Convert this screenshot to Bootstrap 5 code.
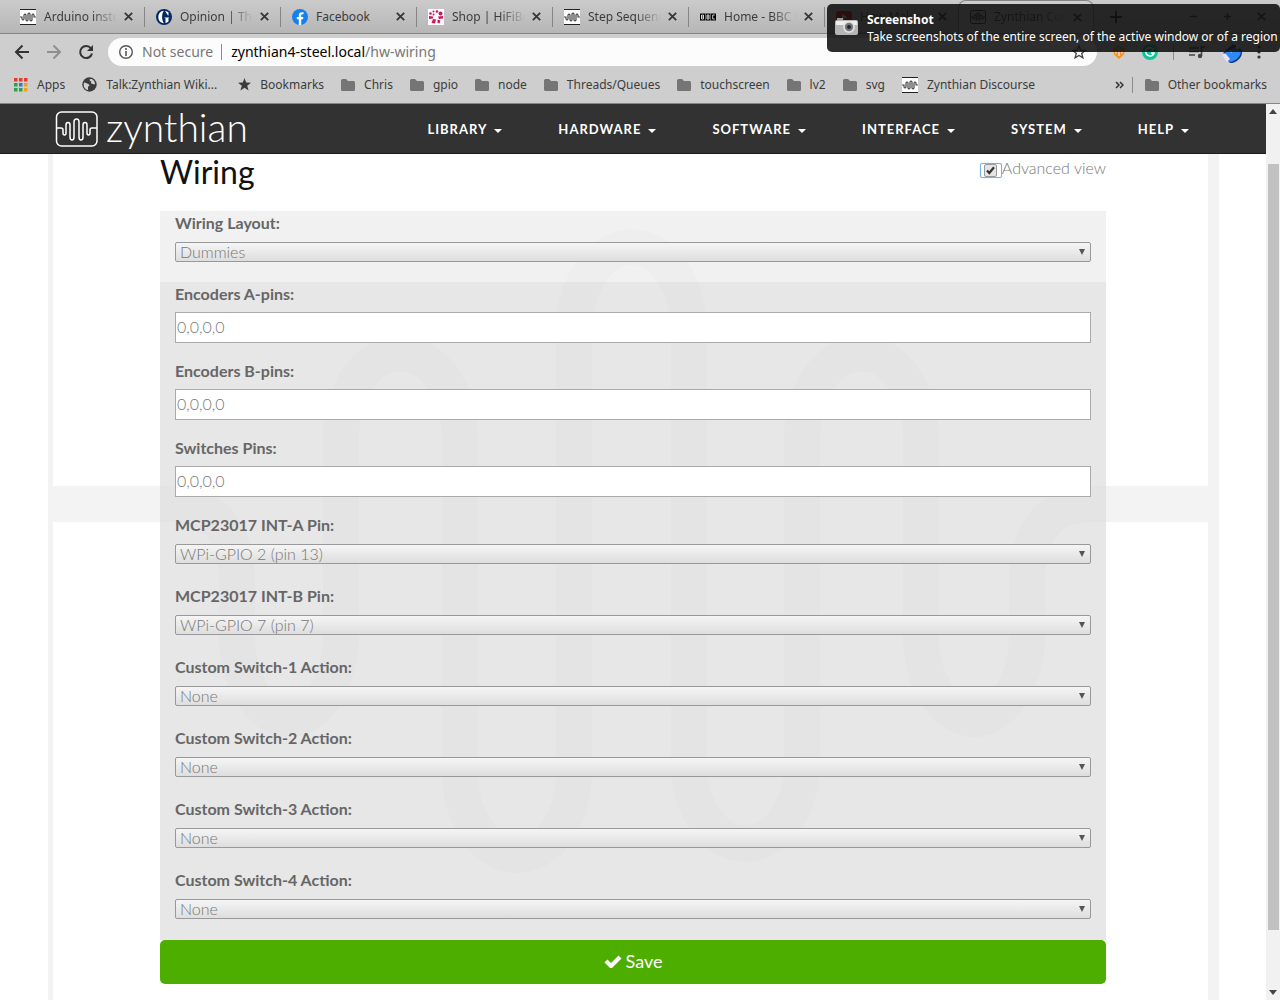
<!DOCTYPE html>
<html lang="en">
<head>
<meta charset="utf-8">
<meta name="viewport" content="width=device-width, initial-scale=1">
<title>Zynthian Configuration</title>
<link href="https://cdn.jsdelivr.net/npm/bootstrap@5.3.0/dist/css/bootstrap.min.css" rel="stylesheet">
<script src="https://cdn.jsdelivr.net/npm/bootstrap@5.3.0/dist/js/bootstrap.bundle.min.js" defer></script>
<style>
  body { font-family: Lato, sans-serif; font-weight: 300; font-size: 16px; line-height: 24px; color: #777; background: #fff; }
  svg { display: block; flex: none; }
  button.plain { border: 0; background: none; padding: 0; color: inherit; display: block; flex: none; }

  /* browser window */
  .chrome { font-family: "Noto Sans", sans-serif; font-weight: 400; font-size: 12px; line-height: 16px; color: #3c3c3c; background: #cecece; border-bottom: 1px solid #858585; }
  .chrome a { color: inherit; text-decoration: none; white-space: nowrap; }
  .tabstrip { height: 34px; padding-left: 9px; background: linear-gradient(#cbcbcb, #b6b6b6); border-bottom: 1px solid #858585; }
  .tab-item { width: 136px; height: 20px; padding: 0 11px; border-right: 1px solid #858585; flex: none; }
  .tab-item.last { width: 133px; border: 0; }
  .tab-item.current { height: 33px; border: 1px solid #858585; border-bottom: 0; border-radius: 8px 8px 0 0; background: #cecece; align-self: flex-end; }
  .tab-title { width: 74px; margin: 0 7px 0 8px; overflow: hidden; white-space: nowrap; -webkit-mask-image: linear-gradient(90deg, #000 65%, transparent); mask-image: linear-gradient(90deg, #000 65%, transparent); }
  .tab-title.whole { -webkit-mask-image: none; mask-image: none; }
  .win-buttons { gap: 25px; padding-right: 14px; }
  .toolbar { height: 36px; padding: 0 19px 0 14px; }
  .extensions { gap: 15px; }
  .omnibox { height: 28px; margin: 0 14px; padding: 0 10px; border-radius: 14px; background: #fcfcfc; font-size: 14px; line-height: 20px; color: #777; }
  .vrule { width: 1px; height: 16px; background: #8c8c8c; flex: none; }
  .omnibox .vrule { margin: 0 9px 0 8px; }
  .bookmarks { height: 33px; padding: 0 13px 4px 14px; }
  .bookmarks a { display: flex; align-items: center; gap: 9px; margin-right: 17px; }
  .bookmarks a:last-child { margin: 0 0 0 4px; }

  .notice { position: absolute; top: 4px; right: 0; width: 453px; height: 48px; padding: 7px 6px 0 8px; gap: 8px; border-radius: 5px; background: rgba(16, 16, 16, .88); color: #fff; font: 400 12px/17px "Noto Sans", sans-serif; white-space: nowrap; z-index: 5; }

  /* page */
  .scroller { width: 14px; background: #f1f1f1; padding: 5px 1px; flex: none; }
  .thumb { height: 766px; margin-top: 50px; width: 11px; background: #c1c1c1; align-self: center; }
  .watermark { position: absolute; inset: 0; width: 100%; height: 100%; }
  .mainnav { height: 50px; padding: 0 49px 0 55px; background: rgba(46, 46, 46, .98); border-bottom: 1px solid #1c1c1c; }
  .wordmark { font-size: 39px; line-height: 44px; font-weight: 300; color: #fff; padding-bottom: 4px; }
  .mainnav .nav-link { padding: 0 28px; font-size: 13px; line-height: 20px; font-weight: 700; letter-spacing: 1px; color: #fff; white-space: nowrap; }
  .mainnav .dropdown-toggle::after { margin-left: 7px; border-width: 4px 4px 0; vertical-align: 1px; }
  .content { max-width: 946px; }
  .content h2 { font-size: 32px; line-height: 35px; font-weight: 400; color: #111; margin: 0; }
  .headline { height: 57px; }
  .headline label { line-height: 27px; }
  .tick { appearance: none; width: 13px; height: 13px; margin: 0; border: 1px solid #9a9a9a; border-radius: 2px; background: #e4e4e4 url("data:image/svg+xml,%3Csvg xmlns='http://www.w3.org/2000/svg' viewBox='0 0 11 11'%3E%3Cpath d='M2 5.5 4.3 8 9 2.3' fill='none' stroke='%23333' stroke-width='2.2'/%3E%3C/svg%3E"); display: block; }
  .tickframe { padding: 0 4px 0 3px; border: 1px solid #70b4f0; border-radius: 2px; margin-top: 9px; box-shadow: 0 0 1px #70b4f0; }
  .panel { background: rgba(235, 235, 235, .7); }
  .panel-inner { background: rgba(0, 0, 0, .04); padding-bottom: 1px; }
  .field { padding: 0 15px 20px; }
  .field.typed { padding-bottom: 16px; }
  .field label { display: block; font-weight: 700; color: #666; height: 31px; }
  .field.typed label { height: 30px; }
  .field select { display: block; width: 100%; height: 20px; padding: 0 4px; border: 1px solid #999; border-radius: 2px; appearance: none; font-size: 16px; line-height: 18px; font-weight: 300; color: #777;
    background: url("data:image/svg+xml,%3Csvg xmlns='http://www.w3.org/2000/svg' width='6' height='6'%3E%3Cpath d='M0 0h6L3 6z' fill='%23555'/%3E%3C/svg%3E") no-repeat right 5px center, linear-gradient(#f5f5f5, #dedede); }
  .field input { display: block; width: 100%; height: 31px; padding: 0 1px 2px; border: 1px solid #aaa; border-radius: 0; background: #fff; font-size: 16px; font-weight: 300; color: #777; }
  .save { height: 44px; border: 0; border-radius: 5px; background: #4eae00; color: #fff; font-size: 18px; line-height: 26px; padding: 0 0 3px; margin-bottom: 16px; }
</style>
</head>
<body>
<!-- shared symbols -->
<svg width="0" height="0" class="position-absolute" aria-hidden="true">
  <symbol id="wave" viewBox="0 0 16 16"><path fill="#fff" d="M0 0h16v16H0z"/><path d="M0 .5h16M0 15.5h16" stroke="#222"/><path d="M0 8h2v2q1 2 2 0V6q1-2 2 0v5q1 2 2 0V5q1-2 2 0v6q1 2 2 0V6q1-2 2 0v2h2" fill="none" stroke="#444" stroke-width="1.2"/></symbol>
  <symbol id="cross" viewBox="0 0 9 9"><path d="m.8.8 7.4 7.4m0-7.4L.8 8.2" stroke="#333" stroke-width="1.7"/></symbol>
  <symbol id="folder" viewBox="0 0 14 12"><path d="M0 1.5Q0 0 1.5 0H5l2 2h5.500Q14 2 14 3.500v7Q14 12 12.500 12h-11Q0 12 0 10.500z" fill="#757575"/></symbol>
</svg>

<div class="min-vh-100 d-flex flex-column position-relative">
  <header class="chrome">
    <div class="tabstrip d-flex align-items-center">
      <div class="tab-item d-flex align-items-center"><svg width="16" height="16"><use href="#wave"/></svg><span class="tab-title">Arduino instead</span><button class="plain" aria-label="Close tab"><svg width="9" height="9"><use href="#cross"/></svg></button></div>
      <div class="tab-item d-flex align-items-center"><svg width="16" height="16" viewBox="0 0 16 16"><circle cx="8" cy="8" r="8" fill="#052962"/><path d="M8 1.800C.5 2 .5 14 8 14.200 5.500 12 5.500 4 8 1.800zM9 2c1.500.2 2.700.8 3.500 1.500v3H12zM8 8.500h5.500l-1 .8v3.200c-.8.700-2 1.200-3 1.400V9.300z" fill="#fff"/></svg><span class="tab-title">Opinion | The G</span><button class="plain" aria-label="Close tab"><svg width="9" height="9"><use href="#cross"/></svg></button></div>
      <div class="tab-item d-flex align-items-center"><svg width="16" height="16" viewBox="0 0 16 16"><circle cx="8" cy="8" r="8" fill="#1480f0"/><path d="M6.800 16v-5.700H4.800V8h2V6.300c0-2 1.200-3.100 3-3.100l1.700.1v2h-1c-1 0-1.300.600-1.300 1.200V8h2.200l-.4 2.300H9.200V16z" fill="#fff"/></svg><span class="tab-title whole">Facebook</span><button class="plain" aria-label="Close tab"><svg width="9" height="9"><use href="#cross"/></svg></button></div>
      <div class="tab-item d-flex align-items-center"><svg width="16" height="16" viewBox="0 0 16 16"><path fill="#fff" d="M0 0h16v16H0z"/><g fill="#d5145f"><circle cx="12.500" cy="4.500" r="2"/><path d="m10 7.500 5-.5v2.500l-4 .5z"/><circle cx="9" cy="2.500" r="1.300"/><circle cx="5.500" cy="2.500" r="1"/><circle cx="2.500" cy="4.500" r="1.300"/><path d="m1 7 4 .5v2L1 10z"/><circle cx="5.500" cy="5.500" r="1"/><path d="m5 10 3 .5-1 4-3.500-.5z"/><path d="m9.500 10.500 3 1-1 3-2-.5z"/></g></svg><span class="tab-title">Shop | HiFiBerry</span><button class="plain" aria-label="Close tab"><svg width="9" height="9"><use href="#cross"/></svg></button></div>
      <div class="tab-item d-flex align-items-center"><svg width="16" height="16"><use href="#wave"/></svg><span class="tab-title">Step Sequencer</span><button class="plain" aria-label="Close tab"><svg width="9" height="9"><use href="#cross"/></svg></button></div>
      <div class="tab-item d-flex align-items-center"><svg width="16" height="16" viewBox="0 0 16 16"><path d="M0 4.500h5v7H0zm5.500 0h5v7h-5zm5.500 0h5v7h-5z"/><g fill="none" stroke="#fff" stroke-width=".8"><path d="M1.500 6h2v4h-2zm0 2h2M7 6h2v4H7zm0 2h2M14.700 6h-2v4h2"/></g></svg><span class="tab-title">Home - BBC N</span><button class="plain" aria-label="Close tab"><svg width="9" height="9"><use href="#cross"/></svg></button></div>
      <div class="tab-item last d-flex align-items-center"><svg width="16" height="16" viewBox="0 0 16 16"><rect y="2" width="16" height="12" rx="3" fill="#e00"/><path d="m6 5 5 3-5 3z" fill="#fff"/></svg><span class="tab-title">How Making</span><button class="plain" aria-label="Close tab"><svg width="9" height="9"><use href="#cross"/></svg></button></div>
      <div class="tab-item current d-flex align-items-center"><svg width="16" height="16" viewBox="0 0 16 16" fill="none" stroke="#222"><rect x=".5" y="1.500" width="15" height="13" rx="2"/><path d="M1 8h2v2h1V6h2v5h1V4h2v7h1V6h2v4h1V8h2"/></svg><span class="tab-title">Zynthian Config</span><button class="plain" aria-label="Close tab"><svg width="9" height="9"><use href="#cross"/></svg></button></div>
      <button class="plain ms-3" aria-label="New tab"><svg width="12" height="12" viewBox="0 0 12 12"><path d="M6 0v12M0 6h12" stroke="#222" stroke-width="2"/></svg></button>
      <div class="win-buttons d-flex align-items-center ms-auto">
        <button class="plain" aria-label="Minimise"><svg width="9" height="9" viewBox="0 0 9 9"><path d="M1 4.500h7" stroke="#333" stroke-width="1.500"/></svg></button>
        <button class="plain" aria-label="Maximise"><svg width="9" height="9" viewBox="0 0 9 9"><path d="M1 4.500h7M4.500 1v7" stroke="#333" stroke-width="1.500"/></svg></button>
        <button class="plain" aria-label="Close"><svg width="9" height="9"><use href="#cross"/></svg></button>
      </div>
    </div>

    <div class="toolbar d-flex align-items-center">
      <button class="plain" aria-label="Back"><svg width="16" height="16" viewBox="0 0 16 16" fill="none" stroke="#333" stroke-width="2"><path d="M15 8H2m6.500-6.500L2 8l6.500 6.500"/></svg></button>
      <button class="plain ms-3" aria-label="Forward"><svg width="16" height="16" viewBox="0 0 16 16" fill="none" stroke="#8f8f8f" stroke-width="2"><path d="M1 8h13M7.500 1.500 14 8l-6.500 6.500"/></svg></button>
      <button class="plain ms-3" aria-label="Reload"><svg width="16" height="16" viewBox="0 0 16 16"><path d="M13 4.500A6 6 0 1 0 14 9.500" fill="none" stroke="#333" stroke-width="2"/><path d="M15 1v6H9z" fill="#333"/></svg></button>
      <div class="omnibox d-flex align-items-center flex-grow-1">
        <svg width="16" height="16" viewBox="0 0 16 16"><circle cx="8" cy="8" r="6.300" fill="none" stroke="#555" stroke-width="1.400"/><path d="M8 4v2m0 1v5" stroke="#555" stroke-width="1.600"/></svg>
        <span class="ms-2">Not secure</span><span class="vrule"></span>
        <span class="flex-grow-1"><span class="text-black">zynthian4-steel.local</span>/hw-wiring</span>
        <button class="plain" aria-label="Bookmark this page"><svg width="16" height="16" viewBox="0 0 16 16"><path d="m8 2 1.700 4.200 4.500.3-3.500 2.900 1.200 4.400L8 11.400l-3.900 2.400 1.200-4.400-3.500-2.900 4.500-.3z" fill="none" stroke="#444" stroke-width="1.300"/></svg></button>
      </div>
      <div class="extensions d-flex align-items-center">
        <svg width="16" height="16" viewBox="0 0 16 16"><path d="m8 1 6 3.500-1 6L8 15l-5-4.500-1-6z" fill="#f7931e"/><path d="M8 4v8M5 6.500v3m6-3v3" stroke="#ddd" stroke-width="1.500"/></svg>
        <svg width="16" height="16" viewBox="0 0 16 16"><circle cx="8" cy="8" r="8" fill="#15c39a"/><path d="M11.500 5.500A4.200 4.200 0 1 0 12 9H9" fill="none" stroke="#fff" stroke-width="1.600"/></svg>
        <span class="vrule"></span>
        <svg width="16" height="14" viewBox="0 0 16 14"><path d="M0 3h10M0 6.500h10M0 10h6M12.500 11V2H16" fill="none" stroke="#444" stroke-width="1.600"/><circle cx="11" cy="11" r="2.200" fill="#444"/></svg>
        <svg width="22" height="22" viewBox="0 0 22 22"><path d="M2 13 13 3l9 6c1 6-4 13-12 13z" fill="#123a7a"/><path d="m3 13 10-6 8 3c0 5-5 10-11 11z" fill="#2f8af5"/><path d="m1 12 5 1 4 5-3 3zM15 7l3-3 1 5zM9 10l2-1 1 3z" fill="#e8e0ff"/></svg>
        <svg width="4" height="16" viewBox="0 0 4 16" fill="#333"><circle cx="2" cy="3" r="1.600"/><circle cx="2" cy="8" r="1.600"/><circle cx="2" cy="13" r="1.600"/></svg>
      </div>
    </div>

    <nav class="bookmarks d-flex align-items-center" aria-label="Bookmarks">
      <a href="#"><svg width="14" height="14" viewBox="0 0 14 14"><path d="M0 0h3.500v3.500H0zM5 0h3.500v3.500H5zm5 0h3.500v3.500H10z" fill="#e8392c"/><path d="M0 5h3.500v3.500H0zM0 10h3.500v3.500H0z" fill="#2ca04c"/><path d="M5 5h3.500v3.500H5z" fill="#2a78e0"/><path d="M5 10h3.500v3.500H5z" fill="#2ca04c"/><path d="M10 5h3.500v3.500H10zm0 5h3.500v3.500H10z" fill="#f0a020"/></svg>Apps</a>
      <a href="#"><svg width="15" height="15" viewBox="0 0 15 15"><circle cx="7.500" cy="7.500" r="7.200" fill="#3c3c3c"/><path d="M2 5.500c2 0 3 1 5 2 1 1 0 2-1 2v3.500c-3-.5-5-3-4-7.500zM8 2c-1 1 0 2 1 2.500S8 6 9.500 6.500 12 8 13 7c0-3-2-5-5-5z" fill="#d0d0d0"/></svg>Talk:Zynthian Wiki...</a>
      <a href="#" class="ps-1"><svg width="13" height="13" viewBox="0 0 13 13"><path d="m6.500 0 1.700 4.500 4.800.2-3.800 3 1.400 4.800-4.100-2.800-4.100 2.800 1.400-4.800-3.800-3 4.800-.2z" fill="#3c3c3c"/></svg>Bookmarks</a>
      <a href="#"><svg width="14" height="12"><use href="#folder"/></svg>Chris</a>
      <a href="#"><svg width="14" height="12"><use href="#folder"/></svg>gpio</a>
      <a href="#"><svg width="14" height="12"><use href="#folder"/></svg>node</a>
      <a href="#"><svg width="14" height="12"><use href="#folder"/></svg>Threads/Queues</a>
      <a href="#"><svg width="14" height="12"><use href="#folder"/></svg>touchscreen</a>
      <a href="#"><svg width="14" height="12"><use href="#folder"/></svg>lv2</a>
      <a href="#"><svg width="14" height="12"><use href="#folder"/></svg>svg</a>
      <a href="#"><svg width="16" height="16"><use href="#wave"/></svg>Zynthian Discourse</a>
      <button class="plain ms-auto" aria-label="More bookmarks"><svg width="9" height="8" viewBox="0 0 9 8"><path d="m1 1 3 3-3 3m4-6 3 3-3 3" fill="none" stroke="#333" stroke-width="1.500"/></svg></button>
      <span class="vrule mx-2"></span>
      <a href="#"><svg width="14" height="12"><use href="#folder"/></svg>Other bookmarks</a>
    </nav>
  </header>

  <div class="notice d-flex" role="status">
    <svg width="24" height="36" viewBox="0 0 24 36"><path d="M2 7h6v3H2z" fill="#999"/><rect x="0" y="9" width="23" height="15" rx="2" fill="#b5b5b5"/><path d="M1 10h21v4H1z" fill="#eee"/><circle cx="14" cy="16" r="6" fill="#e0e0e0"/><circle cx="14" cy="16" r="4.200" fill="#777"/><circle cx="14" cy="16" r="2" fill="#223"/></svg>
    <div><div class="fw-bold">Screenshot</div><div>Take screenshots of the entire screen, of the active window or of a region</div></div>
  </div>

  <div class="d-flex flex-grow-1">
    <div class="flex-grow-1 position-relative">
      <!-- waveform watermark behind the page -->
      <svg class="watermark" viewBox="0 0 1266 896" preserveAspectRatio="xMidYMin slice" aria-hidden="true">
        <path d="M48 0h5v896h-5zM1208 0h11v896h-11z" fill="#f3f3f3"/>
        <path d="M53 400H170C218 400 237 430 237 480V530A52 85 0 0 0 341 530V335A59 85 0 0 1 460 335V668A57 83 0 0 0 574 668V228A57 84 0 0 1 689 228V668A57 83 0 0 0 802 668V335A59 85 0 0 1 921 335V530A53 85 0 0 0 1027 530V480C1027 430 1046 400 1094 400H1208" fill="none" stroke="#f3f3f3" stroke-width="36"/>
      </svg>

      <div class="position-relative">
        <nav class="mainnav d-flex align-items-center justify-content-between">
          <a href="#" class="d-flex align-items-center text-decoration-none gap-2">
            <svg width="43" height="36" viewBox="0 0 43 36" fill="none" stroke="#fff" stroke-width="1.500"><rect x="1.500" y="1" width="40.500" height="34" rx="5"/><path d="M1 17h5q2 0 2 2v3q0 2 1.500 2t1.500-2v-8q0-2.500 2-2.500t2 2.500v12q0 3 2 3t2-3V11q0-3 2.500-3t2.500 3v15q0 3 2 3t2-3V14q0-2.500 2-2.500t2 2.500v8q0 2 1.500 2t1.500-2v-3q0-2 2-2h5"/></svg>
            <span class="wordmark">zynthian</span>
          </a>
          <div class="d-flex">
            <a class="nav-link dropdown-toggle" href="#">LIBRARY</a>
            <a class="nav-link dropdown-toggle" href="#">HARDWARE</a>
            <a class="nav-link dropdown-toggle" href="#">SOFTWARE</a>
            <a class="nav-link dropdown-toggle" href="#">INTERFACE</a>
            <a class="nav-link dropdown-toggle" href="#">SYSTEM</a>
            <a class="nav-link dropdown-toggle" href="#">HELP</a>
          </div>
        </nav>

        <form class="content mx-auto">
          <div class="headline d-flex justify-content-between align-items-start">
            <h2>Wiring</h2>
            <div class="d-flex align-items-start"><span class="tickframe"><input class="tick" type="checkbox" id="adv" checked></span><label for="adv">Advanced view</label></div>
          </div>
          <div class="panel">
            <div class="field"><label for="layout">Wiring Layout:</label><select id="layout"><option>Dummies</option></select></div>
            <div class="panel-inner">
              <div class="field typed"><label for="enca">Encoders A-pins:</label><input type="text" id="enca" value="0,0,0,0"></div>
              <div class="field typed"><label for="encb">Encoders B-pins:</label><input type="text" id="encb" value="0,0,0,0"></div>
              <div class="field typed"><label for="sw">Switches Pins:</label><input type="text" id="sw" value="0,0,0,0"></div>
              <div class="field"><label for="inta">MCP23017 INT-A Pin:</label><select id="inta"><option>WPi-GPIO 2 (pin 13)</option></select></div>
              <div class="field"><label for="intb">MCP23017 INT-B Pin:</label><select id="intb"><option>WPi-GPIO 7 (pin 7)</option></select></div>
              <div class="field"><label for="c1">Custom Switch-1 Action:</label><select id="c1"><option>None</option></select></div>
              <div class="field"><label for="c2">Custom Switch-2 Action:</label><select id="c2"><option>None</option></select></div>
              <div class="field"><label for="c3">Custom Switch-3 Action:</label><select id="c3"><option>None</option></select></div>
              <div class="field"><label for="c4">Custom Switch-4 Action:</label><select id="c4"><option>None</option></select></div>
            </div>
          </div>
          <button type="button" class="save w-100 d-flex align-items-center justify-content-center gap-1"><svg width="18" height="14" viewBox="0 0 18 14"><path d="m2 7 5 5 9-9" fill="none" stroke="#fff" stroke-width="4.200"/></svg>Save</button>
        </form>
      </div>
    </div>
    <div class="scroller d-flex flex-column justify-content-between align-items-center" aria-hidden="true">
      <svg width="8" height="5" viewBox="0 0 8 5"><path d="M0 5h8L4 0z" fill="#444"/></svg>
      <div class="thumb mb-auto"></div>
      <svg width="8" height="5" viewBox="0 0 8 5"><path d="M0 0h8L4 5z" fill="#444"/></svg>
    </div>
  </div>
</div>
</body>
</html>
